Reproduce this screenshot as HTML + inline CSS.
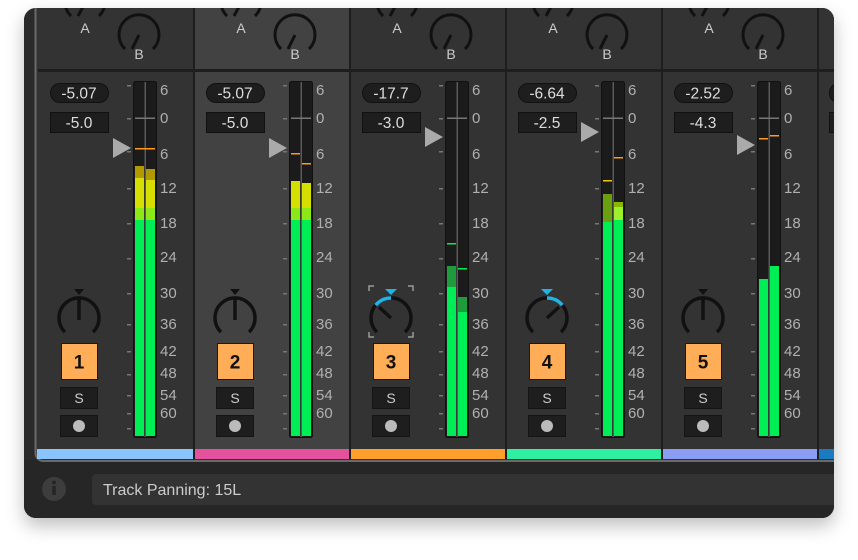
<!DOCTYPE html>
<html><head><meta charset="utf-8"><style>
html,body{margin:0;padding:0;background:#fff;width:858px;height:560px;overflow:hidden}
.win{position:absolute;left:24px;top:8px;width:810px;height:510px;border-radius:12px;overflow:hidden;background:#262626;box-shadow:0 8px 18px rgba(0,0,0,0.25)}
svg{position:absolute;left:0;top:0}
text{font-family:"Liberation Sans",sans-serif}
</style></head><body>
<div class="win"></div>
<svg width="858" height="560" viewBox="0 0 858 560">
<defs>
<clipPath id="wc"><rect x="24" y="8" width="810" height="510" rx="12"/></clipPath>
<g id="scale">
<g fill="#777"><rect x="127" y="85" width="4" height="1.5"/><rect x="127" y="118" width="4" height="1.5"/><rect x="127" y="151" width="4" height="1.5"/><rect x="127" y="188" width="4" height="1.5"/><rect x="127" y="223" width="4" height="1.5"/><rect x="127" y="258" width="4" height="1.5"/><rect x="127" y="293" width="4" height="1.5"/><rect x="127" y="324" width="4" height="1.5"/><rect x="127" y="351" width="4" height="1.5"/><rect x="127" y="374" width="4" height="1.5"/><rect x="127" y="395" width="4" height="1.5"/><rect x="127" y="413" width="4" height="1.5"/><rect x="127" y="428" width="4" height="1.5"/></g>
<g fill="#b0b0b0" font-size="15"><text x="160" y="95">6</text><text x="160" y="123">0</text><text x="160" y="159">6</text><text x="160" y="193">12</text><text x="160" y="228">18</text><text x="160" y="262">24</text><text x="160" y="298">30</text><text x="160" y="329">36</text><text x="160" y="356">42</text><text x="160" y="378">48</text><text x="160" y="400">54</text><text x="160" y="418">60</text></g>
</g>
<g id="top">
<path d="M71 16 A20 20 0 1 1 99 16" fill="none" stroke="#111" stroke-width="3"/>
<line x1="85" y1="3" x2="78" y2="16" stroke="#111" stroke-width="3"/>
<text x="85" y="33" font-size="14" fill="#ccc" text-anchor="middle">A</text>
<path d="M125 49 A20 20 0 1 1 153 49" fill="none" stroke="#111" stroke-width="3"/>
<line x1="139" y1="35" x2="132" y2="49" stroke="#111" stroke-width="3"/>
<text x="139" y="59" font-size="14" fill="#ccc" text-anchor="middle">B</text>
<rect x="38" y="69" width="155" height="3" fill="#1e1e1e"/>
</g>
<g id="meterbg">
<rect x="133.5" y="81.5" width="23" height="356" rx="2" fill="#1b1b1b" stroke="#111"/>
<rect x="144.5" y="82" width="1.5" height="355" fill="#5a5a5a"/>
<rect x="135" y="117.5" width="20" height="1.5" fill="#777"/>
</g>
<g id="btns">
<rect x="60.5" y="387.5" width="37" height="21" fill="#1e1e1e" stroke="#151515"/>
<text x="79" y="403" font-size="14" fill="#ccc" text-anchor="middle">S</text>
<rect x="60.5" y="415.5" width="37" height="21" fill="#1e1e1e" stroke="#151515"/>
<circle cx="79" cy="426" r="6" fill="#bbb"/>
</g>
<g id="pan">
<path d="M64.9 332.1 A20 20 0 1 1 93.1 332.1" fill="none" stroke="#111" stroke-width="3.5"/>
</g>
</defs>
<g clip-path="url(#wc)">
<rect x="24" y="8" width="810" height="452" fill="#2a2a2a"/>
<rect x="35.5" y="-10" width="820" height="471" rx="8" fill="#333" stroke="#6a6a6a" stroke-width="2"/>
<rect x="37" y="8" width="156" height="441" fill="#333"/>
<rect x="195" y="8" width="154" height="441" fill="#424242"/>
<rect x="351" y="8" width="154" height="441" fill="#333"/>
<rect x="507" y="8" width="154" height="441" fill="#333"/>
<rect x="663" y="8" width="154" height="441" fill="#333"/>
<rect x="819" y="8" width="20" height="441" fill="#333"/>
<g fill="#1e1e1e"><rect x="193" y="8" width="2" height="451"/><rect x="349" y="8" width="2" height="451"/><rect x="505" y="8" width="2" height="451"/><rect x="661" y="8" width="2" height="451"/><rect x="817" y="8" width="2" height="451"/></g>
<rect x="819" y="69" width="20" height="3" fill="#1e1e1e"/>
<rect x="829.5" y="83.5" width="20" height="19" rx="9" fill="#1e1e1e" stroke="#111"/>
<rect x="829.5" y="112.5" width="20" height="20" fill="#1e1e1e" stroke="#111"/>

<rect x="37" y="449" width="156" height="10" fill="#8ac4fc"/>
<rect x="195" y="449" width="154" height="10" fill="#e4519c"/>
<rect x="351" y="449" width="154" height="10" fill="#ff9f2b"/>
<rect x="507" y="449" width="154" height="10" fill="#2ef0a0"/>
<rect x="663" y="449" width="154" height="10" fill="#8b9cf4"/>
<rect x="819" y="449" width="20" height="10" fill="#1b7ac0"/>

<g><use href="#top"/><use href="#scale"/><use href="#meterbg"/><use href="#btns"/></g>
<g transform="translate(156,0)"><use href="#top"/><use href="#scale"/><use href="#meterbg"/><use href="#btns"/></g>
<g transform="translate(312,0)"><use href="#top"/><use href="#scale"/><use href="#meterbg"/><use href="#btns"/></g>
<g transform="translate(468,0)"><use href="#top"/><use href="#scale"/><use href="#meterbg"/><use href="#btns"/></g>
<g transform="translate(624,0)"><use href="#top"/><use href="#scale"/><use href="#meterbg"/><use href="#btns"/></g>

<g>
<rect x="50.5" y="83.5" width="58" height="19" rx="9.5" fill="#1e1e1e" stroke="#111"/>
<text x="79" y="98.5" font-size="15.5" fill="#ddd" text-anchor="middle">-5.07</text>
<rect x="50.5" y="112.5" width="58" height="20" fill="#1e1e1e" stroke="#111"/>
<text x="79" y="128" font-size="15.5" fill="#ddd" text-anchor="middle">-5.0</text>
<polygon points="113,138 131,148 113,158" fill="#aaa"/>
<rect x="135" y="166" width="9" height="12" fill="#b09a00"/><rect x="135" y="178" width="9" height="30" fill="#d6e000"/><rect x="135" y="208" width="9" height="12" fill="#8ee818"/><rect x="135" y="220" width="9" height="216" fill="#00ee55"/>
<rect x="146" y="169" width="9" height="11" fill="#b09a00"/><rect x="146" y="180" width="9" height="28" fill="#d6e000"/><rect x="146" y="208" width="9" height="12" fill="#8ee818"/><rect x="146" y="220" width="9" height="216" fill="#00ee55"/>
<rect x="135" y="148" width="20" height="1.5" fill="#ff9a1a"/>
<use href="#pan"/><line x1="79" y1="297" x2="79" y2="320" stroke="#111" stroke-width="3.5"/><polygon points="74,289 84,289 79,295" fill="#111"/>
<rect x="61.5" y="343.5" width="36" height="36" fill="#ffad56" stroke="#1a1a1a"/>
<text x="79" y="368.5" font-size="19" font-weight="bold" fill="#111" text-anchor="middle">1</text>
</g>
<g transform="translate(156,0)">
<rect x="50.5" y="83.5" width="58" height="19" rx="9.5" fill="#1e1e1e" stroke="#111"/>
<text x="79" y="98.5" font-size="15.5" fill="#ddd" text-anchor="middle">-5.07</text>
<rect x="50.5" y="112.5" width="58" height="20" fill="#1e1e1e" stroke="#111"/>
<text x="79" y="128" font-size="15.5" fill="#ddd" text-anchor="middle">-5.0</text>
<polygon points="113,138 131,148 113,158" fill="#aaa"/>
<rect x="135" y="181" width="9" height="27" fill="#d6e000"/><rect x="135" y="208" width="9" height="12" fill="#8ee818"/><rect x="135" y="220" width="9" height="216" fill="#00ee55"/>
<rect x="146" y="183" width="9" height="25" fill="#d6e000"/><rect x="146" y="208" width="9" height="12" fill="#8ee818"/><rect x="146" y="220" width="9" height="216" fill="#00ee55"/>
<rect x="135" y="153" width="9" height="1.5" fill="#ff9a1a"/><rect x="146" y="163" width="9" height="1.5" fill="#ff9a1a"/>
<use href="#pan"/><line x1="79" y1="297" x2="79" y2="320" stroke="#111" stroke-width="3.5"/><polygon points="74,289 84,289 79,295" fill="#111"/>
<rect x="61.5" y="343.5" width="36" height="36" fill="#ffad56" stroke="#1a1a1a"/>
<text x="79" y="368.5" font-size="19" font-weight="bold" fill="#111" text-anchor="middle">2</text>
</g>
<g transform="translate(312,0)">
<rect x="50.5" y="83.5" width="58" height="19" rx="9.5" fill="#1e1e1e" stroke="#111"/>
<text x="79" y="98.5" font-size="15.5" fill="#ddd" text-anchor="middle">-17.7</text>
<rect x="50.5" y="112.5" width="58" height="20" fill="#1e1e1e" stroke="#111"/>
<text x="79" y="128" font-size="15.5" fill="#ddd" text-anchor="middle">-3.0</text>
<polygon points="113,127 131,137 113,147" fill="#aaa"/>
<rect x="135" y="266" width="9" height="21" fill="#1f9a3c"/><rect x="135" y="287" width="9" height="149" fill="#00ee55"/>
<rect x="146" y="297" width="9" height="15" fill="#1f9a3c"/><rect x="146" y="312" width="9" height="124" fill="#00ee55"/>
<rect x="135" y="243" width="9" height="1.5" fill="#00ee55"/><rect x="146" y="268" width="9" height="1.5" fill="#00ee55"/>
<use href="#pan"/><path d="M63.7 305.1 A20 20 0 0 1 79 298" fill="none" stroke="#1eb4e6" stroke-width="3.5"/>
<line x1="79" y1="318" x2="67" y2="307" stroke="#111" stroke-width="3.5"/><polygon points="73,289 85,289 79,295" fill="#1eb4e6"/>
<path d="M57 291 V286 H62 M96 286 H101 V291 M57 332 V337 H62 M96 337 H101 V332" fill="none" stroke="#999" stroke-width="1.5"/>
<rect x="61.5" y="343.5" width="36" height="36" fill="#ffad56" stroke="#1a1a1a"/>
<text x="79" y="368.5" font-size="19" font-weight="bold" fill="#111" text-anchor="middle">3</text>
</g>
<g transform="translate(468,0)">
<rect x="50.5" y="83.5" width="58" height="19" rx="9.5" fill="#1e1e1e" stroke="#111"/>
<text x="79" y="98.5" font-size="15.5" fill="#ddd" text-anchor="middle">-6.64</text>
<rect x="50.5" y="112.5" width="58" height="20" fill="#1e1e1e" stroke="#111"/>
<text x="79" y="128" font-size="15.5" fill="#ddd" text-anchor="middle">-2.5</text>
<polygon points="113,122 131,132 113,142" fill="#aaa"/>
<rect x="135" y="194" width="9" height="28" fill="#6aa010"/><rect x="135" y="222" width="9" height="214" fill="#00ee55"/>
<rect x="146" y="202" width="9" height="5" fill="#8ab800"/><rect x="146" y="207" width="9" height="13" fill="#9ef02a"/><rect x="146" y="220" width="9" height="216" fill="#00ee55"/>
<rect x="135" y="180" width="9" height="1.5" fill="#e8c800"/><rect x="146" y="157" width="9" height="1.5" fill="#ff9a1a"/>
<use href="#pan"/><path d="M79 298 A20 20 0 0 1 94.3 305.1" fill="none" stroke="#1eb4e6" stroke-width="3.5"/>
<line x1="79" y1="318" x2="91" y2="307" stroke="#111" stroke-width="3.5"/><polygon points="73,289 85,289 79,295" fill="#1eb4e6"/>
<rect x="61.5" y="343.5" width="36" height="36" fill="#ffad56" stroke="#1a1a1a"/>
<text x="79" y="368.5" font-size="19" font-weight="bold" fill="#111" text-anchor="middle">4</text>
</g>
<g transform="translate(624,0)">
<rect x="50.5" y="83.5" width="58" height="19" rx="9.5" fill="#1e1e1e" stroke="#111"/>
<text x="79" y="98.5" font-size="15.5" fill="#ddd" text-anchor="middle">-2.52</text>
<rect x="50.5" y="112.5" width="58" height="20" fill="#1e1e1e" stroke="#111"/>
<text x="79" y="128" font-size="15.5" fill="#ddd" text-anchor="middle">-4.3</text>
<polygon points="113,135 131,145 113,155" fill="#aaa"/>
<rect x="135" y="279" width="9" height="157" fill="#00ee55"/>
<rect x="146" y="266" width="9" height="170" fill="#00ee55"/>
<rect x="135" y="138" width="9" height="1.5" fill="#ff9a1a"/><rect x="146" y="135" width="9" height="1.5" fill="#ff9a1a"/>
<use href="#pan"/><line x1="79" y1="297" x2="79" y2="320" stroke="#111" stroke-width="3.5"/><polygon points="74,289 84,289 79,295" fill="#111"/>
<rect x="61.5" y="343.5" width="36" height="36" fill="#ffad56" stroke="#1a1a1a"/>
<text x="79" y="368.5" font-size="19" font-weight="bold" fill="#111" text-anchor="middle">5</text>
</g>

<rect x="24" y="462" width="810" height="56" fill="#262626"/>
<circle cx="54" cy="489" r="12" fill="#3d3d3d"/>
<circle cx="54" cy="482.5" r="2" fill="#262626"/>
<rect x="52.2" y="486" width="3.6" height="9" fill="#262626"/>
<rect x="92" y="474" width="760" height="31" rx="4" fill="#333"/>
<text x="103" y="495" font-size="16" fill="#ccc">Track Panning: 15L</text>
</g>
</svg>
</body></html>
